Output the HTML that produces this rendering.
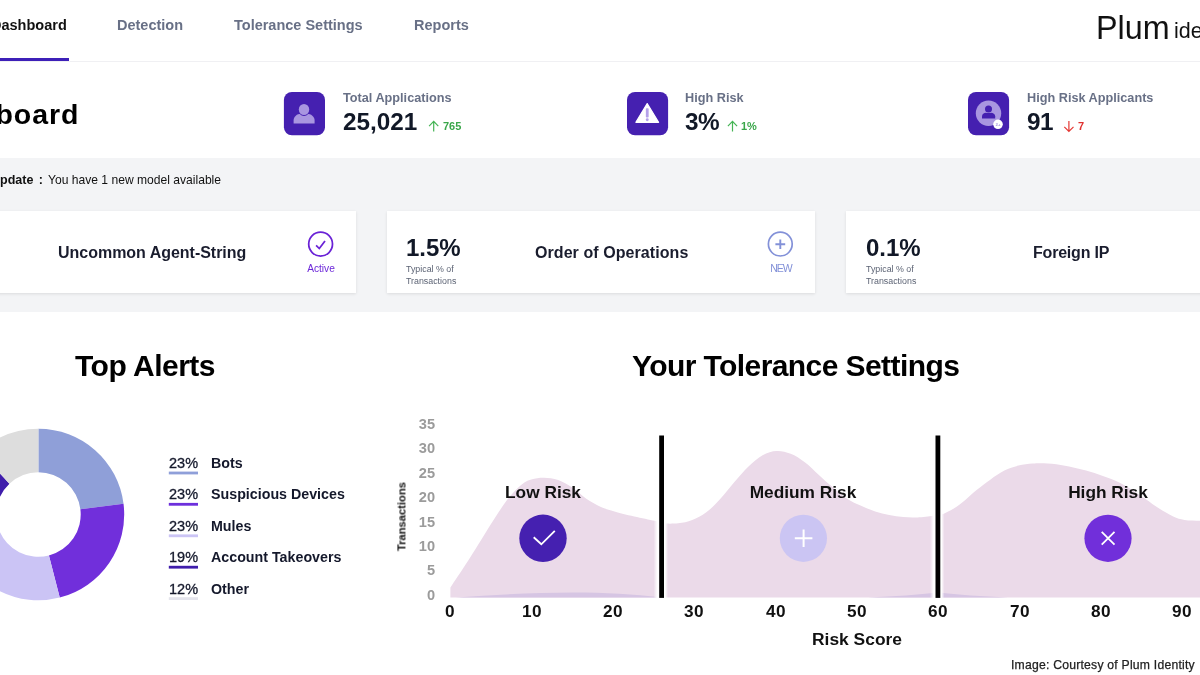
<!DOCTYPE html>
<html lang="en"><head><meta charset="utf-8"><title>Plum Identity Dashboard</title>
<style>
html,body{margin:0;padding:0}
body{width:1200px;height:675px;overflow:hidden;position:relative;background:#fff;font-family:"Liberation Sans",sans-serif}
.t{position:absolute;white-space:nowrap;line-height:1;margin:0;will-change:transform}
.abs{position:absolute}
.card{position:absolute;background:#fff;box-shadow:0 1px 3px rgba(0,0,0,.10)}
</style></head><body>
<div class="abs" style="left:0;top:61.2px;width:1200px;height:1.2px;background:#f0f0f3"></div>
<div class="abs" style="left:0;top:58px;width:69px;height:3.3px;background:#3d20b8"></div>
<div class="t" id="nav1" style="top:17.53px;font-size:14.5px;color:#111;font-weight:700;left:-9.50px;">Dashboard</div>
<div class="t" id="nav2" style="top:17.53px;font-size:14.5px;color:#687086;font-weight:700;left:117.30px;">Detection</div>
<div class="t" id="nav3" style="top:17.53px;font-size:14.5px;color:#687086;font-weight:700;left:234.00px;">Tolerance Settings</div>
<div class="t" id="nav4" style="top:17.53px;font-size:14.5px;color:#687086;font-weight:700;left:413.50px;">Reports</div>
<div class="t" id="logo1" style="top:11.26px;font-size:32.3px;color:#111;font-weight:400;left:1095.90px;transform:translateY(0.6px);">Plum</div>
<div class="t" id="logo2" style="top:21.20px;font-size:21.5px;color:#111;font-weight:400;left:1173.80px;">identity</div>
<div class="t" id="h1" style="top:100.07px;font-size:28.5px;color:#000;font-weight:700;left:-77.60px;letter-spacing:0.95px;">Dashboard</div>
<div class="t" id="s1l" style="top:92.25px;font-size:12.7px;color:#687086;font-weight:700;left:342.50px;">Total Applications</div>
<div class="t" id="s1v" style="top:109.63px;font-size:24.3px;color:#111827;font-weight:700;left:342.50px;letter-spacing:0px;">25,021</div>
<div class="t" id="s2l" style="top:92.25px;font-size:12.7px;color:#687086;font-weight:700;left:684.90px;">High Risk</div>
<div class="t" id="s2v" style="top:109.63px;font-size:24.3px;color:#111827;font-weight:700;left:684.90px;letter-spacing:-0.6px;">3%</div>
<div class="t" id="s3l" style="top:92.25px;font-size:12.7px;color:#687086;font-weight:700;left:1026.50px;">High Risk Applicants</div>
<div class="t" id="s3v" style="top:109.63px;font-size:24.3px;color:#111827;font-weight:700;left:1026.50px;letter-spacing:-0.6px;">91</div>
<div class="abs" style="left:0;top:157.5px;width:1200px;height:154.7px;background:#f3f4f6"></div>
<div class="t" id="upd1" style="top:173.92px;font-size:12.5px;color:#111;font-weight:700;left:-8.70px;word-spacing:2px;">Update :</div>
<div class="t" id="upd2" style="top:174.06px;font-size:12.1px;color:#111;font-weight:400;left:48.30px;">You have 1 new model available</div>
<div class="card" style="left:-60px;top:211.3px;width:415.5px;height:81.3px"></div>
<div class="card" style="left:387px;top:211.3px;width:428px;height:81.3px"></div>
<div class="card" style="left:846px;top:211.3px;width:428px;height:81.3px"></div>
<svg class="abs" style="left:0;top:0" width="1200" height="675" viewBox="0 0 1200 675" xmlns="http://www.w3.org/2000/svg">
<defs><linearGradient id="glow" x1="0" x2="1" y1="0" y2="0"><stop offset="0" stop-color="#fff" stop-opacity="0"/><stop offset="0.26" stop-color="#fff" stop-opacity="1"/><stop offset="0.8" stop-color="#fff" stop-opacity="1"/><stop offset="1" stop-color="#fff" stop-opacity="0"/></linearGradient></defs>
<path d="M450.4,587.4C453.3,583.0 462.8,568.9 468.1,560.7C473.4,552.5 477.5,545.7 482.2,538.2C486.9,530.7 491.6,522.7 496.3,515.7C501.0,508.7 505.6,501.5 510.3,496.0C515.0,490.5 520.2,485.4 524.4,482.5C528.6,479.6 532.4,479.3 535.7,478.5C539.0,477.7 540.4,477.5 544.1,477.7C547.9,477.9 553.5,478.3 558.2,479.9C562.9,481.5 567.5,484.4 572.2,487.5C576.9,490.6 581.6,495.6 586.3,498.8C591.0,502.0 595.7,504.6 600.4,506.7C605.1,508.8 608.4,509.7 614.5,511.4C620.6,513.1 630.0,515.5 637.0,517.1C644.0,518.8 652.5,520.4 656.7,521.3C660.9,522.2 661.1,522.1 662.0,522.3L662.0,597.6L450.4,597.6Z" fill="#ebdae9"/>
<path d="M662.0,523.6C664.7,523.5 673.1,523.9 678.1,523.3C683.1,522.7 687.5,521.7 692.2,519.9C696.9,518.1 701.6,515.8 706.3,512.3C711.0,508.8 715.7,503.9 720.4,498.8C725.1,493.7 729.7,487.3 734.4,481.9C739.1,476.5 743.8,470.8 748.5,466.4C753.2,461.9 757.9,457.8 762.6,455.2C767.3,452.6 772.0,451.2 776.7,451.0C781.4,450.8 786.0,451.9 790.7,453.8C795.4,455.7 800.1,458.7 804.8,462.2C809.5,465.7 814.2,470.7 818.9,474.9C823.6,479.1 828.3,483.5 833.0,487.5C837.7,491.5 842.3,495.8 847.0,498.8C851.7,501.9 856.4,503.7 861.1,505.8C865.8,507.9 870.5,509.9 875.2,511.5C879.9,513.0 884.5,514.2 889.2,515.1C893.9,516.0 898.6,516.7 903.3,517.1C908.0,517.5 912.5,517.6 917.4,517.4C922.3,517.2 929.5,516.1 932.9,515.7C936.3,515.3 937.1,515.1 938.0,515.0L938.0,597.6L662.0,597.6Z" fill="#ebdae9"/>
<path d="M938.0,515.5C938.8,515.3 939.9,515.4 942.5,514.3C945.1,513.1 950.0,511.0 953.8,508.6C957.5,506.2 961.2,503.2 965.0,500.2C968.8,497.1 972.1,493.7 976.3,490.3C980.5,486.9 985.6,483.0 990.3,479.7C995.0,476.4 999.7,473.0 1004.4,470.6C1009.1,468.2 1013.8,466.8 1018.5,465.6C1023.2,464.4 1028.3,464.0 1032.5,463.6C1036.7,463.2 1039.1,463.1 1043.8,463.3C1048.5,463.5 1055.1,464.1 1060.7,465.0C1066.3,465.9 1072.0,467.1 1077.6,468.4C1083.2,469.7 1088.9,471.1 1094.5,472.9C1100.1,474.7 1105.7,476.7 1111.3,479.1C1116.9,481.5 1122.6,484.2 1128.2,487.5C1133.8,490.8 1139.9,495.3 1145.1,498.8C1150.3,502.3 1154.5,505.7 1159.2,508.6C1163.9,511.6 1169.0,514.6 1173.2,516.5C1177.4,518.4 1180.0,519.2 1184.5,519.9C1189.0,520.6 1195.8,520.6 1200.0,520.7C1204.2,520.9 1208.3,520.8 1210.0,520.8L1210.0,597.6L938.0,597.6Z" fill="#ebdae9"/>
<path d="M456,597.6C495,594.5 535,592.7 573,592.6C605,592.6 635,594.5 660,597.2L660,597.6Z" fill="#d6c5e3"/>
<path d="M868,597.6C895,596.6 918,594.6 938,592.6C958,594.6 982,596.6 1008,597.6Z" fill="#d6c5e3"/>
<rect x="653.6" y="435.5" width="14.5" height="162.6" fill="url(#glow)"/>
<rect x="659.2" y="435.5" width="4.8" height="162.4" fill="#000"/>
<rect x="929.9" y="435.5" width="14.5" height="162.6" fill="url(#glow)"/>
<rect x="935.5" y="435.5" width="4.8" height="162.4" fill="#000"/>
<circle cx="543" cy="538.3" r="23.7" fill="#4520b0"/><path d="M533.7,537.2L541.3,544.3L554.8,530.8" fill="none" stroke="#fff" stroke-width="1.85"/>
<circle cx="803.4" cy="538.3" r="23.6" fill="#cbc5f3"/><path d="M794.8,538.3H812.4M803.6,529.6V547.1" fill="none" stroke="#fff" stroke-width="2"/>
<circle cx="1108" cy="538.3" r="23.6" fill="#712fda"/><path d="M1101.7,531.9L1114.5,544.7M1114.5,531.9L1101.7,544.7" fill="none" stroke="#fff" stroke-width="1.8"/>
<path d="M38.40,428.70A85.8,85.8 0 0 1 123.52,503.75L80.37,509.20A42.3,42.3 0 0 0 38.40,472.20Z" fill="#8f9fd8"/>
<path d="M123.52,503.75A85.8,85.8 0 0 1 59.74,597.60L48.92,555.47A42.3,42.3 0 0 0 80.37,509.20Z" fill="#712fdb"/>
<path d="M59.74,597.60A85.8,85.8 0 0 1 -41.37,546.09L-0.93,530.07A42.3,42.3 0 0 0 48.92,555.47Z" fill="#cbc4f5"/>
<path d="M-41.37,546.09A85.8,85.8 0 0 1 -20.33,451.95L9.44,483.66A42.3,42.3 0 0 0 -0.93,530.07Z" fill="#3f1dab"/>
<path d="M-20.33,451.95A85.8,85.8 0 0 1 38.40,428.70L38.40,472.20A42.3,42.3 0 0 0 9.44,483.66Z" fill="#dddddd"/>
<rect x="168.8" y="471.6" width="29.2" height="2.8" fill="#8f9fd9"/>
<rect x="168.8" y="502.9" width="29.2" height="2.8" fill="#6d2fdc"/>
<rect x="168.8" y="534.4" width="29.2" height="2.8" fill="#cbc4f5"/>
<rect x="168.8" y="565.8" width="29.2" height="2.8" fill="#3f1dab"/>
<rect x="168.8" y="597.2" width="29.2" height="2.8" fill="#e4e4ec"/>
<circle cx="320.6" cy="244.1" r="11.9" fill="none" stroke="#6a22d6" stroke-width="1.75"/><path d="M316.1,245.3L319.3,248.5L325,240.9" fill="none" stroke="#6a22d6" stroke-width="1.75"/>
<circle cx="780.3" cy="244.1" r="11.9" fill="none" stroke="#8391d8" stroke-width="1.7"/><path d="M775.4,244.3H785.2M780.3,239.5V249" fill="none" stroke="#8391d8" stroke-width="1.9"/>
<path d="M433.7,131.6V121.4M429.09999999999997,126.1L433.7,121.4L438.3,126.1" fill="none" stroke="#45b455" stroke-width="1.2"/>
<path d="M732.5,131.6V121.4M727.9,126.1L732.5,121.4L737.1,126.1" fill="none" stroke="#45b455" stroke-width="1.2"/>
<path d="M1068.9,121.1V131.5M1064.3000000000002,126.8L1068.9,131.5L1073.5,126.8" fill="none" stroke="#e53935" stroke-width="1.2"/>
<rect x="283.9" y="92" width="41.1" height="43.3" rx="8" fill="#4520b0"/>
<rect x="627" y="92" width="41.1" height="43.3" rx="8" fill="#4520b0"/>
<rect x="968" y="92" width="41.1" height="43.3" rx="8" fill="#4520b0"/>
<g fill="#a996e0"><path d="M293.6,123.5V120.5C293.6,116.5 297,113.7 301,113.7H307C311,113.7 314.6,116.5 314.6,120.5V123.5Z"/><ellipse cx="304" cy="109.5" rx="6" ry="6.4" fill="#4520b0"/><ellipse cx="304" cy="109.5" rx="5.2" ry="5.6"/></g>
<path d="M647.2,103.6L658.6,122.3H635.9Z" fill="#fff" stroke="#fff" stroke-width="1.2" stroke-linejoin="round"/><rect x="645.85" y="108.3" width="2.8" height="9.2" rx="0.8" fill="#b5a1ea"/><circle cx="647.25" cy="119.7" r="1.45" fill="#b5a1ea"/>
<circle cx="988.5" cy="113.2" r="12.7" fill="#a996e0"/><path d="M982,118.5V116.3C982,114 984,112.7 986,112.7H991C993,112.7 995.2,114 995.2,116.3V118.5Z" fill="#4520b0"/><circle cx="988.5" cy="108.9" r="4.1" fill="#a996e0"/><circle cx="988.5" cy="108.9" r="3.5" fill="#4520b0"/><circle cx="998" cy="124.3" r="4.8" fill="#fff"/>
</svg>
<div class="t" id="c1t" style="top:245.16px;font-size:16px;color:#1a1d2e;font-weight:700;left:58.20px;letter-spacing:-0.02px;">Uncommon Agent-String</div>
<div class="t" id="c2t" style="top:245.16px;font-size:16px;color:#1a1d2e;font-weight:700;left:535.00px;letter-spacing:0.07px;">Order of Operations</div>
<div class="t" id="c3t" style="top:245.16px;font-size:16px;color:#1a1d2e;font-weight:700;left:1033.00px;letter-spacing:-0.2px;">Foreign IP</div>
<div class="t" id="c2p" style="top:235.88px;font-size:24px;color:#111827;font-weight:700;left:406.00px;">1.5%</div>
<div class="t" id="c3p" style="top:235.88px;font-size:24px;color:#111827;font-weight:700;left:866.00px;">0.1%</div>
<div class="t" id="c2a" style="top:264.51px;font-size:8.85px;color:#5d6475;font-weight:400;left:406.00px;">Typical % of</div>
<div class="t" id="c2b" style="top:277.11px;font-size:8.85px;color:#5d6475;font-weight:400;left:406.00px;">Transactions</div>
<div class="t" id="c3a" style="top:264.51px;font-size:8.85px;color:#5d6475;font-weight:400;left:866.00px;">Typical % of</div>
<div class="t" id="c3b" style="top:277.11px;font-size:8.85px;color:#5d6475;font-weight:400;left:866.00px;">Transactions</div>
<div class="t" id="act" style="top:263.67px;font-size:10.2px;color:#6d28d9;font-weight:400;left:120.50px;width:400px;text-align:center;">Active</div>
<div class="t" id="new" style="top:263.41px;font-size:10.5px;color:#8391d8;font-weight:400;left:581.20px;width:400px;text-align:center;letter-spacing:-0.95px;">NEW</div>
<div class="t" id="ta" style="top:350.61px;font-size:30px;color:#000;font-weight:700;left:75.20px;letter-spacing:-0.5px;">Top Alerts</div>
<div class="t" id="yts" style="top:350.61px;font-size:30px;color:#000;font-weight:700;left:631.80px;letter-spacing:-0.58px;">Your Tolerance Settings</div>
<div class="t" id="d1" style="top:121.49px;font-size:11px;color:#3aa64a;font-weight:700;left:442.70px;">765</div>
<div class="t" id="d2" style="top:121.49px;font-size:11px;color:#3aa64a;font-weight:700;left:741.20px;">1%</div>
<div class="t" id="d3" style="top:121.49px;font-size:11px;color:#e0312f;font-weight:700;left:1077.70px;">7</div>
<div class="t" id="badge" style="top:123.08px;font-size:4.4px;color:#a996e0;font-weight:700;left:798.10px;width:400px;text-align:center;">2+</div>
<div class="t" id="lp0" style="top:455.93px;font-size:14.5px;color:#14182b;font-weight:400;left:168.80px;-webkit-text-stroke:0.3px #14182b;">23%</div>
<div class="t" id="ll0" style="top:456.14px;font-size:14.25px;color:#14182b;font-weight:700;left:211.00px;">Bots</div>
<div class="t" id="lp1" style="top:487.23px;font-size:14.5px;color:#14182b;font-weight:400;left:168.80px;-webkit-text-stroke:0.3px #14182b;">23%</div>
<div class="t" id="ll1" style="top:487.44px;font-size:14.25px;color:#14182b;font-weight:700;left:211.00px;">Suspicious Devices</div>
<div class="t" id="lp2" style="top:518.73px;font-size:14.5px;color:#14182b;font-weight:400;left:168.80px;-webkit-text-stroke:0.3px #14182b;">23%</div>
<div class="t" id="ll2" style="top:518.94px;font-size:14.25px;color:#14182b;font-weight:700;left:211.00px;">Mules</div>
<div class="t" id="lp3" style="top:550.13px;font-size:14.5px;color:#14182b;font-weight:400;left:168.80px;-webkit-text-stroke:0.3px #14182b;">19%</div>
<div class="t" id="ll3" style="top:550.34px;font-size:14.25px;color:#14182b;font-weight:700;left:211.00px;">Account Takeovers</div>
<div class="t" id="lp4" style="top:581.53px;font-size:14.5px;color:#14182b;font-weight:400;left:168.80px;-webkit-text-stroke:0.3px #14182b;">12%</div>
<div class="t" id="ll4" style="top:581.74px;font-size:14.25px;color:#14182b;font-weight:700;left:211.00px;">Other</div>
<div class="t" id="y35" style="top:417.04px;font-size:14.6px;color:#9b9b9b;font-weight:700;left:34.90px;width:400px;text-align:right;">35</div>
<div class="t" id="y30" style="top:441.44px;font-size:14.6px;color:#9b9b9b;font-weight:700;left:34.90px;width:400px;text-align:right;">30</div>
<div class="t" id="y25" style="top:465.84px;font-size:14.6px;color:#9b9b9b;font-weight:700;left:34.90px;width:400px;text-align:right;">25</div>
<div class="t" id="y20" style="top:490.24px;font-size:14.6px;color:#9b9b9b;font-weight:700;left:34.90px;width:400px;text-align:right;">20</div>
<div class="t" id="y15" style="top:514.64px;font-size:14.6px;color:#9b9b9b;font-weight:700;left:34.90px;width:400px;text-align:right;">15</div>
<div class="t" id="y10" style="top:539.04px;font-size:14.6px;color:#9b9b9b;font-weight:700;left:34.90px;width:400px;text-align:right;">10</div>
<div class="t" id="y5" style="top:563.44px;font-size:14.6px;color:#9b9b9b;font-weight:700;left:34.90px;width:400px;text-align:right;">5</div>
<div class="t" id="y0" style="top:587.84px;font-size:14.6px;color:#9b9b9b;font-weight:700;left:34.90px;width:400px;text-align:right;">0</div>
<div class="t" id="x0" style="top:603.24px;font-size:17.2px;color:#111;font-weight:700;left:250.20px;width:400px;text-align:center;letter-spacing:0.35px;">0</div>
<div class="t" id="x1" style="top:603.24px;font-size:17.2px;color:#111;font-weight:700;left:331.55px;width:400px;text-align:center;letter-spacing:0.35px;">10</div>
<div class="t" id="x2" style="top:603.24px;font-size:17.2px;color:#111;font-weight:700;left:412.90px;width:400px;text-align:center;letter-spacing:0.35px;">20</div>
<div class="t" id="x3" style="top:603.24px;font-size:17.2px;color:#111;font-weight:700;left:494.25px;width:400px;text-align:center;letter-spacing:0.35px;">30</div>
<div class="t" id="x4" style="top:603.24px;font-size:17.2px;color:#111;font-weight:700;left:575.60px;width:400px;text-align:center;letter-spacing:0.35px;">40</div>
<div class="t" id="x5" style="top:603.24px;font-size:17.2px;color:#111;font-weight:700;left:656.95px;width:400px;text-align:center;letter-spacing:0.35px;">50</div>
<div class="t" id="x6" style="top:603.24px;font-size:17.2px;color:#111;font-weight:700;left:738.30px;width:400px;text-align:center;letter-spacing:0.35px;">60</div>
<div class="t" id="x7" style="top:603.24px;font-size:17.2px;color:#111;font-weight:700;left:819.65px;width:400px;text-align:center;letter-spacing:0.35px;">70</div>
<div class="t" id="x8" style="top:603.24px;font-size:17.2px;color:#111;font-weight:700;left:901.00px;width:400px;text-align:center;letter-spacing:0.35px;">80</div>
<div class="t" id="x9" style="top:603.24px;font-size:17.2px;color:#111;font-weight:700;left:982.35px;width:400px;text-align:center;letter-spacing:0.35px;">90</div>
<div class="t" id="rs" style="top:630.87px;font-size:17.4px;color:#111;font-weight:700;left:656.50px;width:400px;text-align:center;">Risk Score</div>
<div class="t" id="lr" style="top:483.96px;font-size:17.3px;color:#111;font-weight:700;left:343.00px;width:400px;text-align:center;">Low Risk</div>
<div class="t" id="mr" style="top:483.96px;font-size:17.3px;color:#111;font-weight:700;left:603.30px;width:400px;text-align:center;">Medium Risk</div>
<div class="t" id="hr" style="top:483.96px;font-size:17.3px;color:#111;font-weight:700;left:908.00px;width:400px;text-align:center;">High Risk</div>
<div class="t" id="tr" style="left:202.1px;top:511.3px;width:400px;text-align:center;font-size:11.2px;font-weight:700;color:#111;transform:rotate(-90deg);transform-origin:200px 5.55px">Transactions</div>
<div class="t" id="cap" style="top:658.67px;font-size:12.2px;color:#222;font-weight:400;left:1011.30px;letter-spacing:0.22px;-webkit-text-stroke:0.25px #222;text-shadow:0 0 2px #fff,0 0 2px #fff,0 0 3px #fff;">Image: Courtesy of Plum Identity</div>
</body></html>
